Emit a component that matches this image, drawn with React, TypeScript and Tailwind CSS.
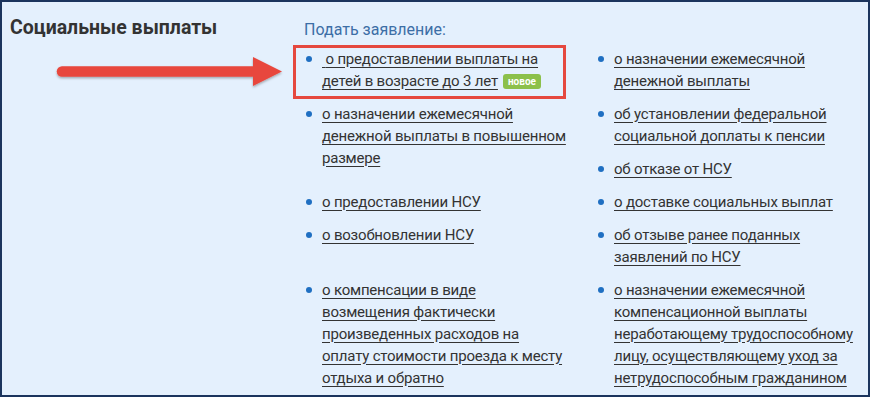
import React from "react";

const Bullet = () => (
  <span className="mt-[8px] ml-[6px] mr-[10px] h-[6px] w-[6px] shrink-0 rounded-full bg-[#1f6fc2]" />
);

type Item = { lines: string[]; mt: string; badge?: boolean; boxed?: boolean; lead?: boolean };

const left: Item[] = [
  { lines: ["о предоставлении выплаты на", "детей в возрасте до 3 лет"], mt: "mt-0", badge: true, boxed: true, lead: true },
  { lines: ["о назначении ежемесячной", "денежной выплаты в повышенном", "размере"], mt: "mt-[11px]" },
  { lines: ["о предоставлении НСУ"], mt: "mt-[22px]" },
  { lines: ["о возобновлении НСУ"], mt: "mt-[11px]" },
  {
    lines: [
      "о компенсации в виде",
      "возмещения фактически",
      "произведенных расходов на",
      "оплату стоимости проезда к месту",
      "отдыха и обратно",
    ],
    mt: "mt-[33px]",
  },
];

const right: Item[] = [
  { lines: ["о назначении ежемесячной", "денежной выплаты"], mt: "mt-0" },
  { lines: ["об установлении федеральной", "социальной доплаты к пенсии"], mt: "mt-[11px]" },
  { lines: ["об отказе от НСУ"], mt: "mt-[11px]" },
  { lines: ["о доставке социальных выплат"], mt: "mt-[11px]" },
  { lines: ["об отзыве ранее поданных", "заявлений по НСУ"], mt: "mt-[11px]" },
  {
    lines: [
      "о назначении ежемесячной",
      "компенсационной выплаты",
      "неработающему трудоспособному",
      "лицу, осуществляющему уход за",
      "нетрудоспособным гражданином",
    ],
    mt: "mt-[11px]",
  },
];

const ListItem = ({ item }: { item: Item }) => (
  <li className={`relative flex ${item.mt}`}>
    {item.boxed && (
      <div className="pointer-events-none absolute left-[-7px] top-[-3px] h-[54px] w-[273px] border-[3px] border-[#e5483f]" />
    )}
    <Bullet />
    <div className="leading-[22px] tracking-[-0.2px]">
      <a
        href="#"
        className="text-[#333333] underline decoration-[#333333] underline-offset-[3px]"
      >
        {item.lead ? "\u00a0" : ""}
        {item.lines.map((l, i) => (
          <React.Fragment key={i}>
            {i > 0 && <br />}
            {l}
          </React.Fragment>
        ))}
      </a>
      {item.badge && (
        <span className="ml-[5px] inline-block rounded-[3px] bg-[#8cc04b] px-[5px] align-[1px] text-[10px] font-bold leading-[15px] tracking-normal text-white">
          новое
        </span>
      )}
    </div>
  </li>
);

export default function App() {
  return (
    <div
      className="flex h-[397px] w-[870px] border-2 border-[#1b345d] bg-[#e4f0fd]"
      style={{ fontFamily: "Roboto, 'Noto Sans', sans-serif" }}
    >
      <div className="w-[298px] shrink-0 pl-[8px] pt-[12px]">
        <h2 className="text-[19.5px] font-bold leading-[28px] text-[#333333]">Социальные выплаты</h2>
        <svg
          className="ml-[40px] mt-[12px] block"
          width="240"
          height="40"
          viewBox="0 0 240 40"
        >
          <defs>
            <filter id="sh" x="-10%" y="-30%" width="120%" height="160%">
              <feDropShadow dx="0" dy="1.5" stdDeviation="1.2" floodColor="#000" floodOpacity="0.3" />
            </filter>
          </defs>
          <g filter="url(#sh)">
            <line x1="12" y1="17.5" x2="206" y2="17.5" stroke="#e8473e" strokeWidth="10.5" strokeLinecap="round" />
            <polygon points="203,3 232,17.5 203,32" fill="#e8473e" />
          </g>
        </svg>
      </div>
      <div className="flex-1 pt-[17px] text-[15px]">
        <div className="ml-[4px] text-[16px] leading-[22px] text-[#3c6ea6]">Подать заявление:</div>
        <div className="mt-[6.5px] flex">
          <ul className="w-[292px] shrink-0">
            {left.map((it, i) => (
              <ListItem key={i} item={it} />
            ))}
          </ul>
          <ul className="flex-1">
            {right.map((it, i) => (
              <ListItem key={i} item={it} />
            ))}
          </ul>
        </div>
      </div>
    </div>
  );
}
